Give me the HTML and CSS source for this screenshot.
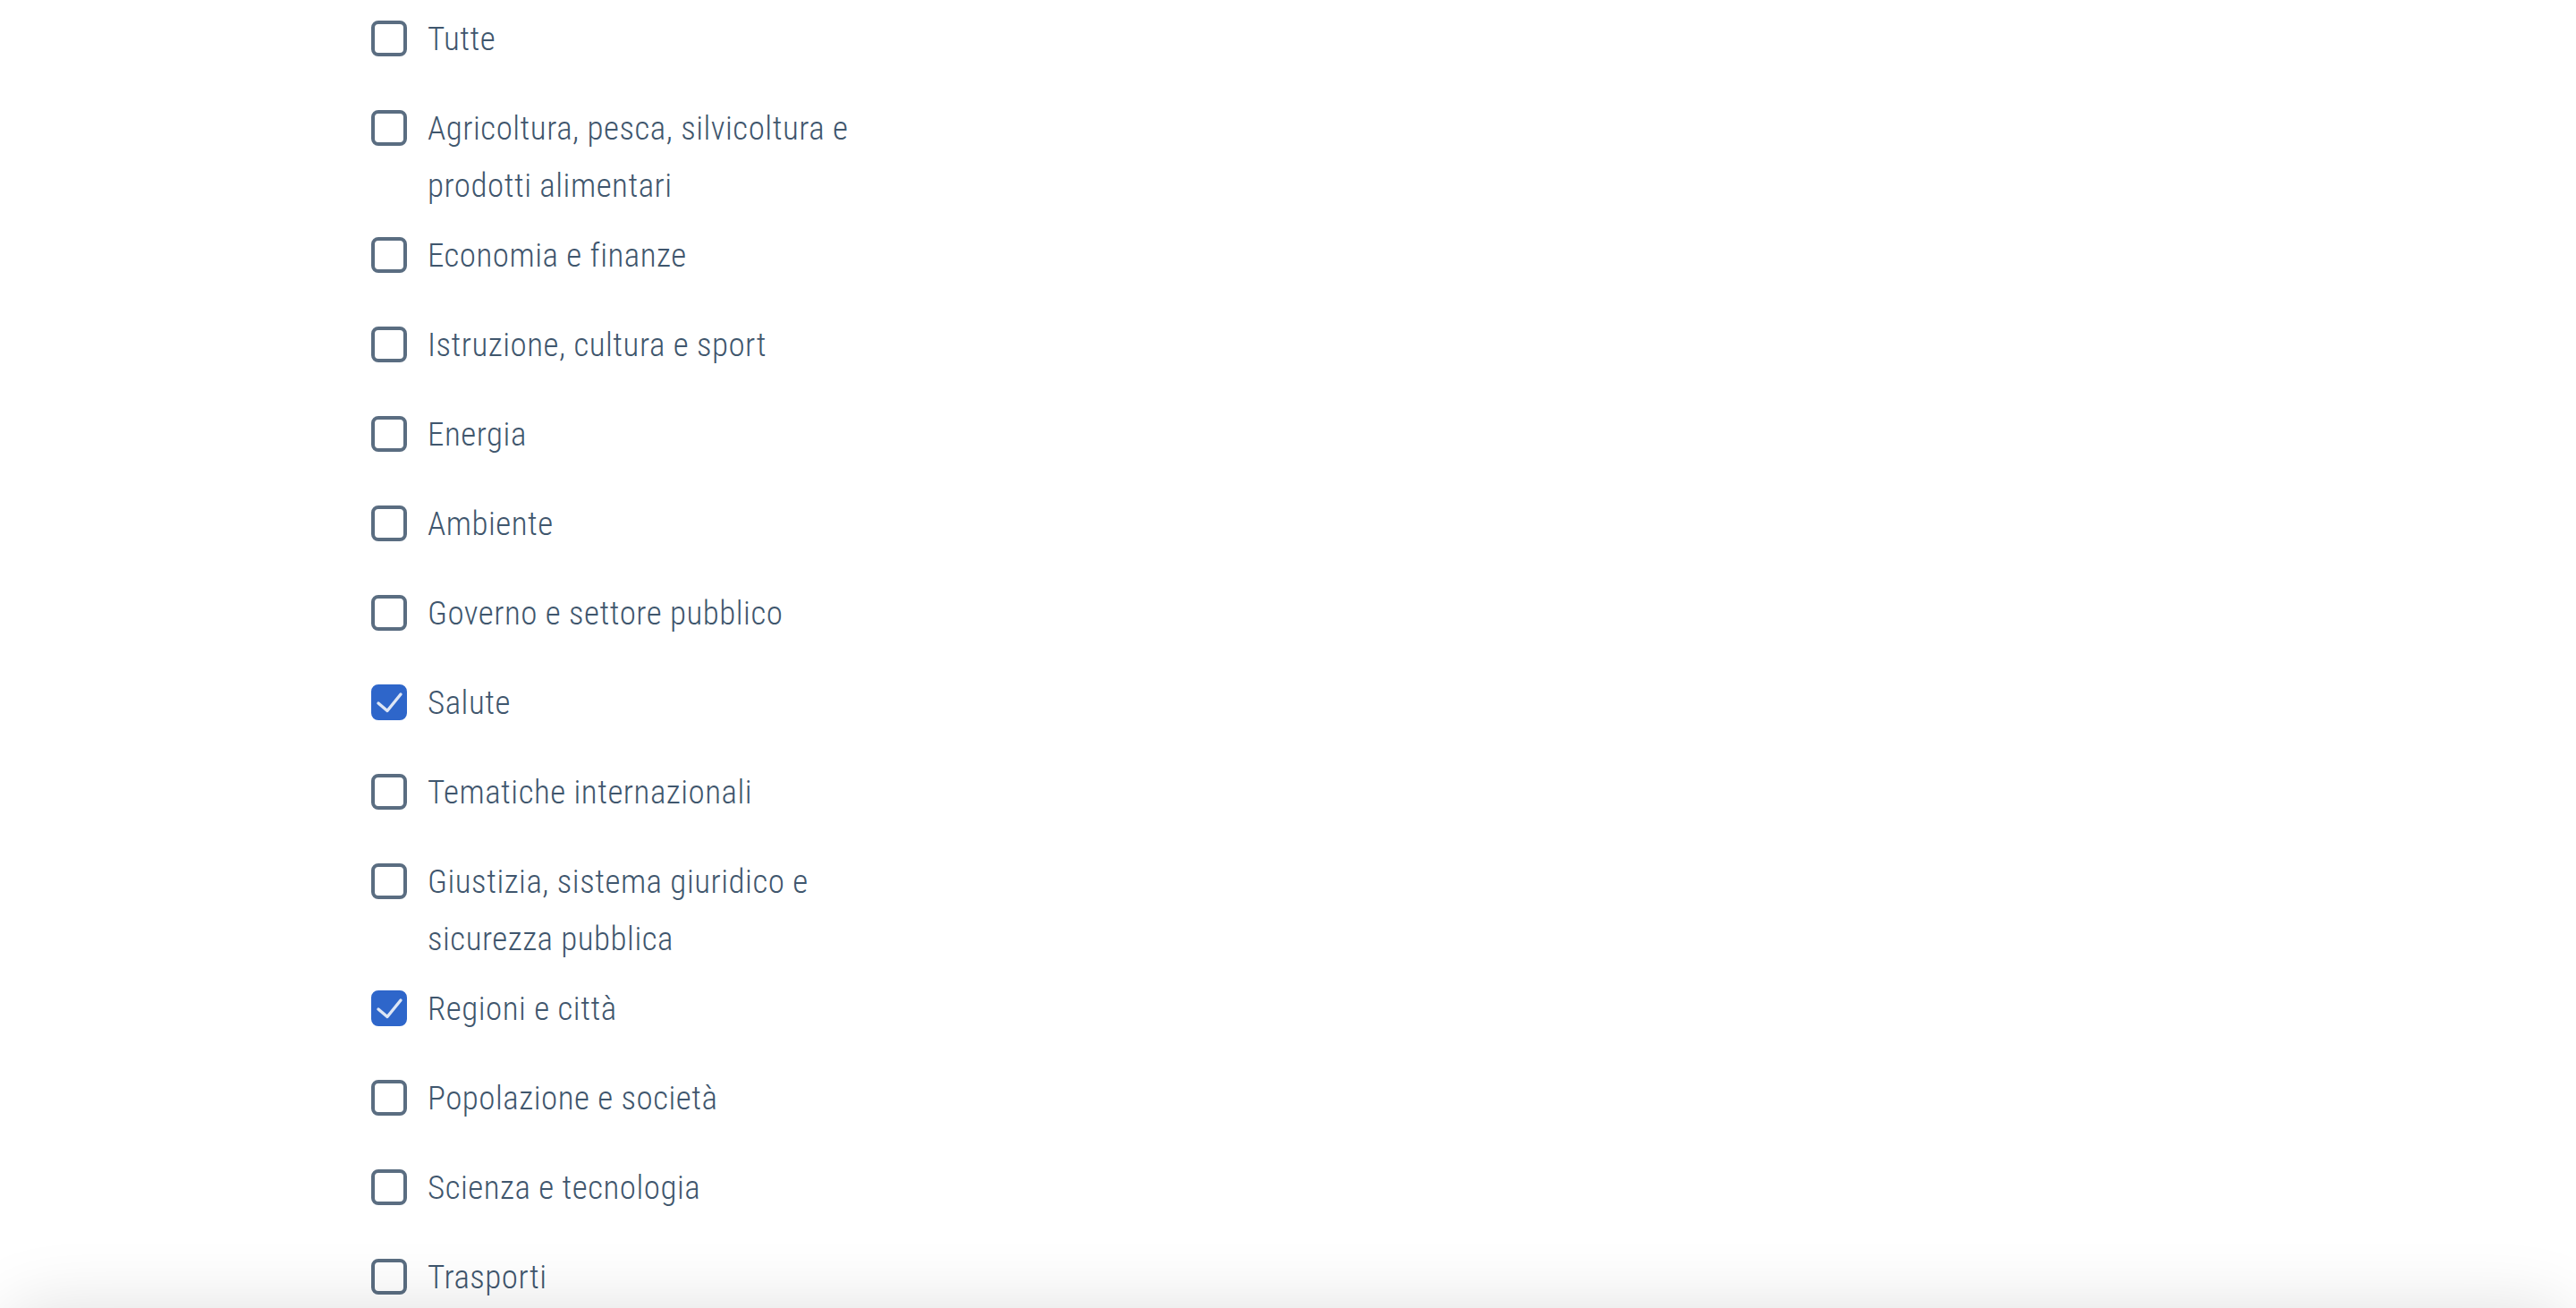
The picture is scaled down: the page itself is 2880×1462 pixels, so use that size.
FILE: index.html
```
<!DOCTYPE html>
<html lang="it">
<head>
<meta charset="utf-8">
<title>Temi</title>
<link rel="stylesheet" href="styles.css">
</head>
<body>
<main class="filters">
  <ul class="check-list">
    <li class="check-item"><span class="box"></span><span class="label">Tutte</span></li>
    <li class="check-item"><span class="box"></span><span class="label">Agricoltura, pesca, silvicoltura e prodotti alimentari</span></li>
    <li class="check-item"><span class="box"></span><span class="label">Economia e finanze</span></li>
    <li class="check-item"><span class="box"></span><span class="label">Istruzione, cultura e sport</span></li>
    <li class="check-item"><span class="box"></span><span class="label">Energia</span></li>
    <li class="check-item"><span class="box"></span><span class="label">Ambiente</span></li>
    <li class="check-item"><span class="box"></span><span class="label">Governo e settore pubblico</span></li>
    <li class="check-item"><span class="box checked"><svg viewBox="0 0 40 40"><polyline points="8,21 18,29.5 33,11"/></svg></span><span class="label">Salute</span></li>
    <li class="check-item"><span class="box"></span><span class="label">Tematiche internazionali</span></li>
    <li class="check-item"><span class="box"></span><span class="label">Giustizia, sistema giuridico e sicurezza pubblica</span></li>
    <li class="check-item"><span class="box checked"><svg viewBox="0 0 40 40"><polyline points="8,21 18,29.5 33,11"/></svg></span><span class="label">Regioni e città</span></li>
    <li class="check-item"><span class="box"></span><span class="label">Popolazione e società</span></li>
    <li class="check-item"><span class="box"></span><span class="label">Scienza e tecnologia</span></li>
    <li class="check-item"><span class="box"></span><span class="label">Trasporti</span></li>
  </ul>
</main>
<div class="bottom-shadow"></div>
</body>
</html>
```
FILE: styles.css
```
html, body {
  margin: 0;
  padding: 0;
  background: #ffffff;
}

body {
  font-family: "Roboto Condensed", Roboto, "Liberation Sans", sans-serif;
  color: #3f566d;
  overflow: hidden;
  height: 1462px;
}

.filters {
  padding: 12px 0 0 415px;
}

.check-list {
  list-style: none;
  margin: 0;
  padding: 0;
  width: 600px;
}

.check-item {
  display: flex;
  align-items: flex-start;
  min-height: 86px;
  margin-bottom: 14px;
}

.box {
  flex: 0 0 auto;
  box-sizing: border-box;
  width: 40px;
  height: 40px;
  margin-top: 11px;
  border: 4px solid #5a6d81;
  border-radius: 8px;
  background: #ffffff;
  position: relative;
}

.box.checked {
  border-color: #2e66ca;
  background: #2e66ca;
}

.box svg {
  position: absolute;
  left: -4px;
  top: -4px;
  width: 40px;
  height: 40px;
}

.box svg polyline {
  fill: none;
  stroke: #dde6f5;
  stroke-width: 3.4;
  stroke-linecap: round;
  stroke-linejoin: round;
}

.label {
  display: block;
  margin-left: 23px;
  width: 500px;
  font-size: 37px;
  font-weight: 300;
  line-height: 64px;
  letter-spacing: 0.5px;
}

.bottom-shadow {
  position: fixed;
  left: 0;
  right: 0;
  bottom: -100px;
  height: 100px;
  border-radius: 60px;
  background: #ffffff;
  box-shadow: 0 0 80px rgba(0, 0, 0, 0.13);
  pointer-events: none;
}
```
